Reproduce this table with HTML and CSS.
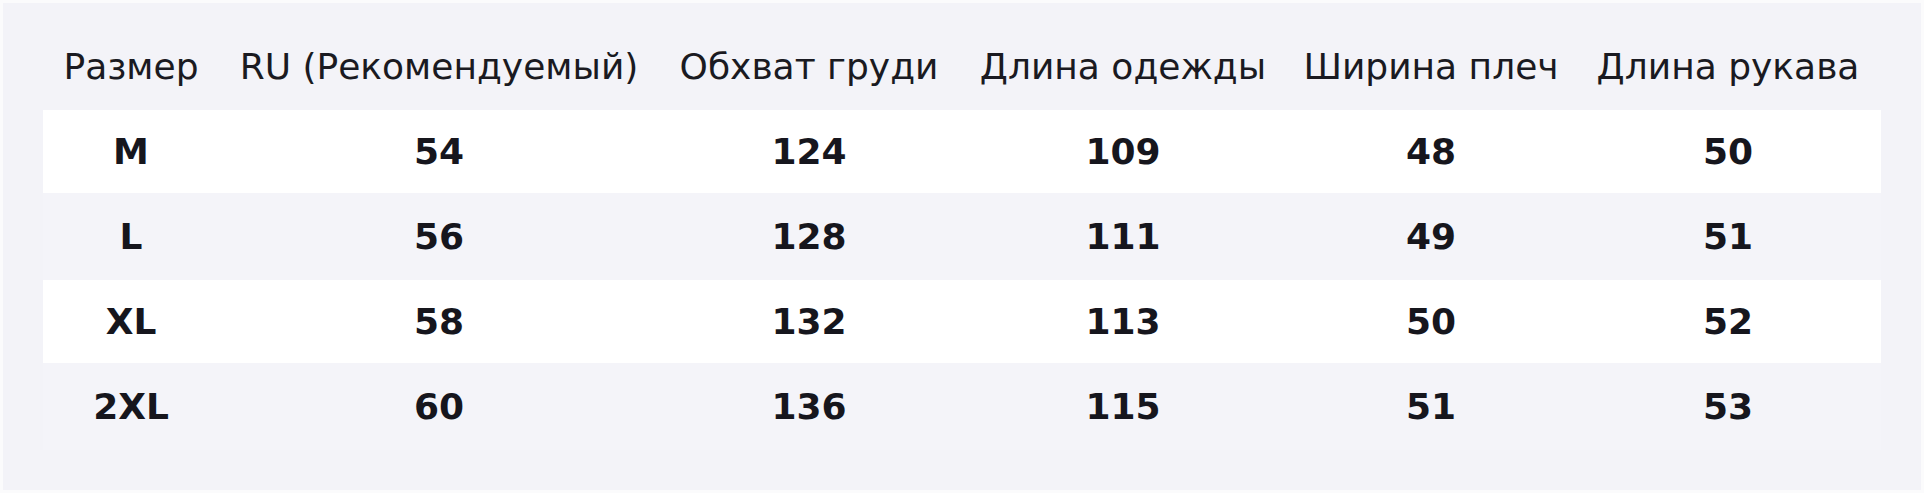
FILE: index.html
```html
<!DOCTYPE html>
<html lang="ru">
<head>
<meta charset="utf-8">
<title>Таблица размеров</title>
<link rel="stylesheet" href="styles.css">
</head>
<body>
<div class="panel">
  <table class="size-table">
    <colgroup>
      <col class="c1"><col class="c2"><col class="c3"><col class="c4"><col class="c5"><col class="c6">
    </colgroup>
    <thead>
      <tr class="row-gray">
        <th>Размер</th>
        <th>RU (Рекомендуемый)</th>
        <th>Обхват груди</th>
        <th>Длина одежды</th>
        <th>Ширина плеч</th>
        <th>Длина рукава</th>
      </tr>
    </thead>
    <tbody>
      <tr class="row-white">
        <td>M</td><td>54</td><td>124</td><td>109</td><td>48</td><td>50</td>
      </tr>
      <tr class="row-gray">
        <td>L</td><td>56</td><td>128</td><td>111</td><td>49</td><td>51</td>
      </tr>
      <tr class="row-white">
        <td>XL</td><td>58</td><td>132</td><td>113</td><td>50</td><td>52</td>
      </tr>
      <tr class="row-gray">
        <td>2XL</td><td>60</td><td>136</td><td>115</td><td>51</td><td>53</td>
      </tr>
    </tbody>
  </table>
</div>
</body>
</html>
```

FILE: styles.css
```css
html, body {
  margin: 0;
  padding: 0;
  background: #fbfbfc;
}

body {
  padding: 3px;
  font-family: "DejaVu Sans", Verdana, sans-serif;
  color: #17171e;
}

.panel {
  background: #f3f3f8;
  padding: 20px 40px 40px;
}

.size-table {
  width: 100%;
  table-layout: fixed;
  border-collapse: collapse;
  border-spacing: 0;
}

.c1 { width: 176px; }
.c2 { width: 440px; }
.c3 { width: 300px; }
.c4 { width: 328px; }
.c5 { width: 288px; }
.c6 { width: 306px; }

.size-table th,
.size-table td {
  padding: 0;
  text-align: center;
  vertical-align: middle;
  font-size: 36px;
  line-height: 1;
  white-space: nowrap;
}

.size-table th {
  font-weight: normal;
  color: #1a1a21;
}

.size-table td {
  font-weight: bold;
  color: #16161d;
}

.row-gray th,
.row-gray td {
  height: 87px;
  background: #f4f4f9;
}

.size-table thead .row-gray th {
  background: transparent;
}

.row-white td {
  height: 83px;
  background: #ffffff;
}
```
